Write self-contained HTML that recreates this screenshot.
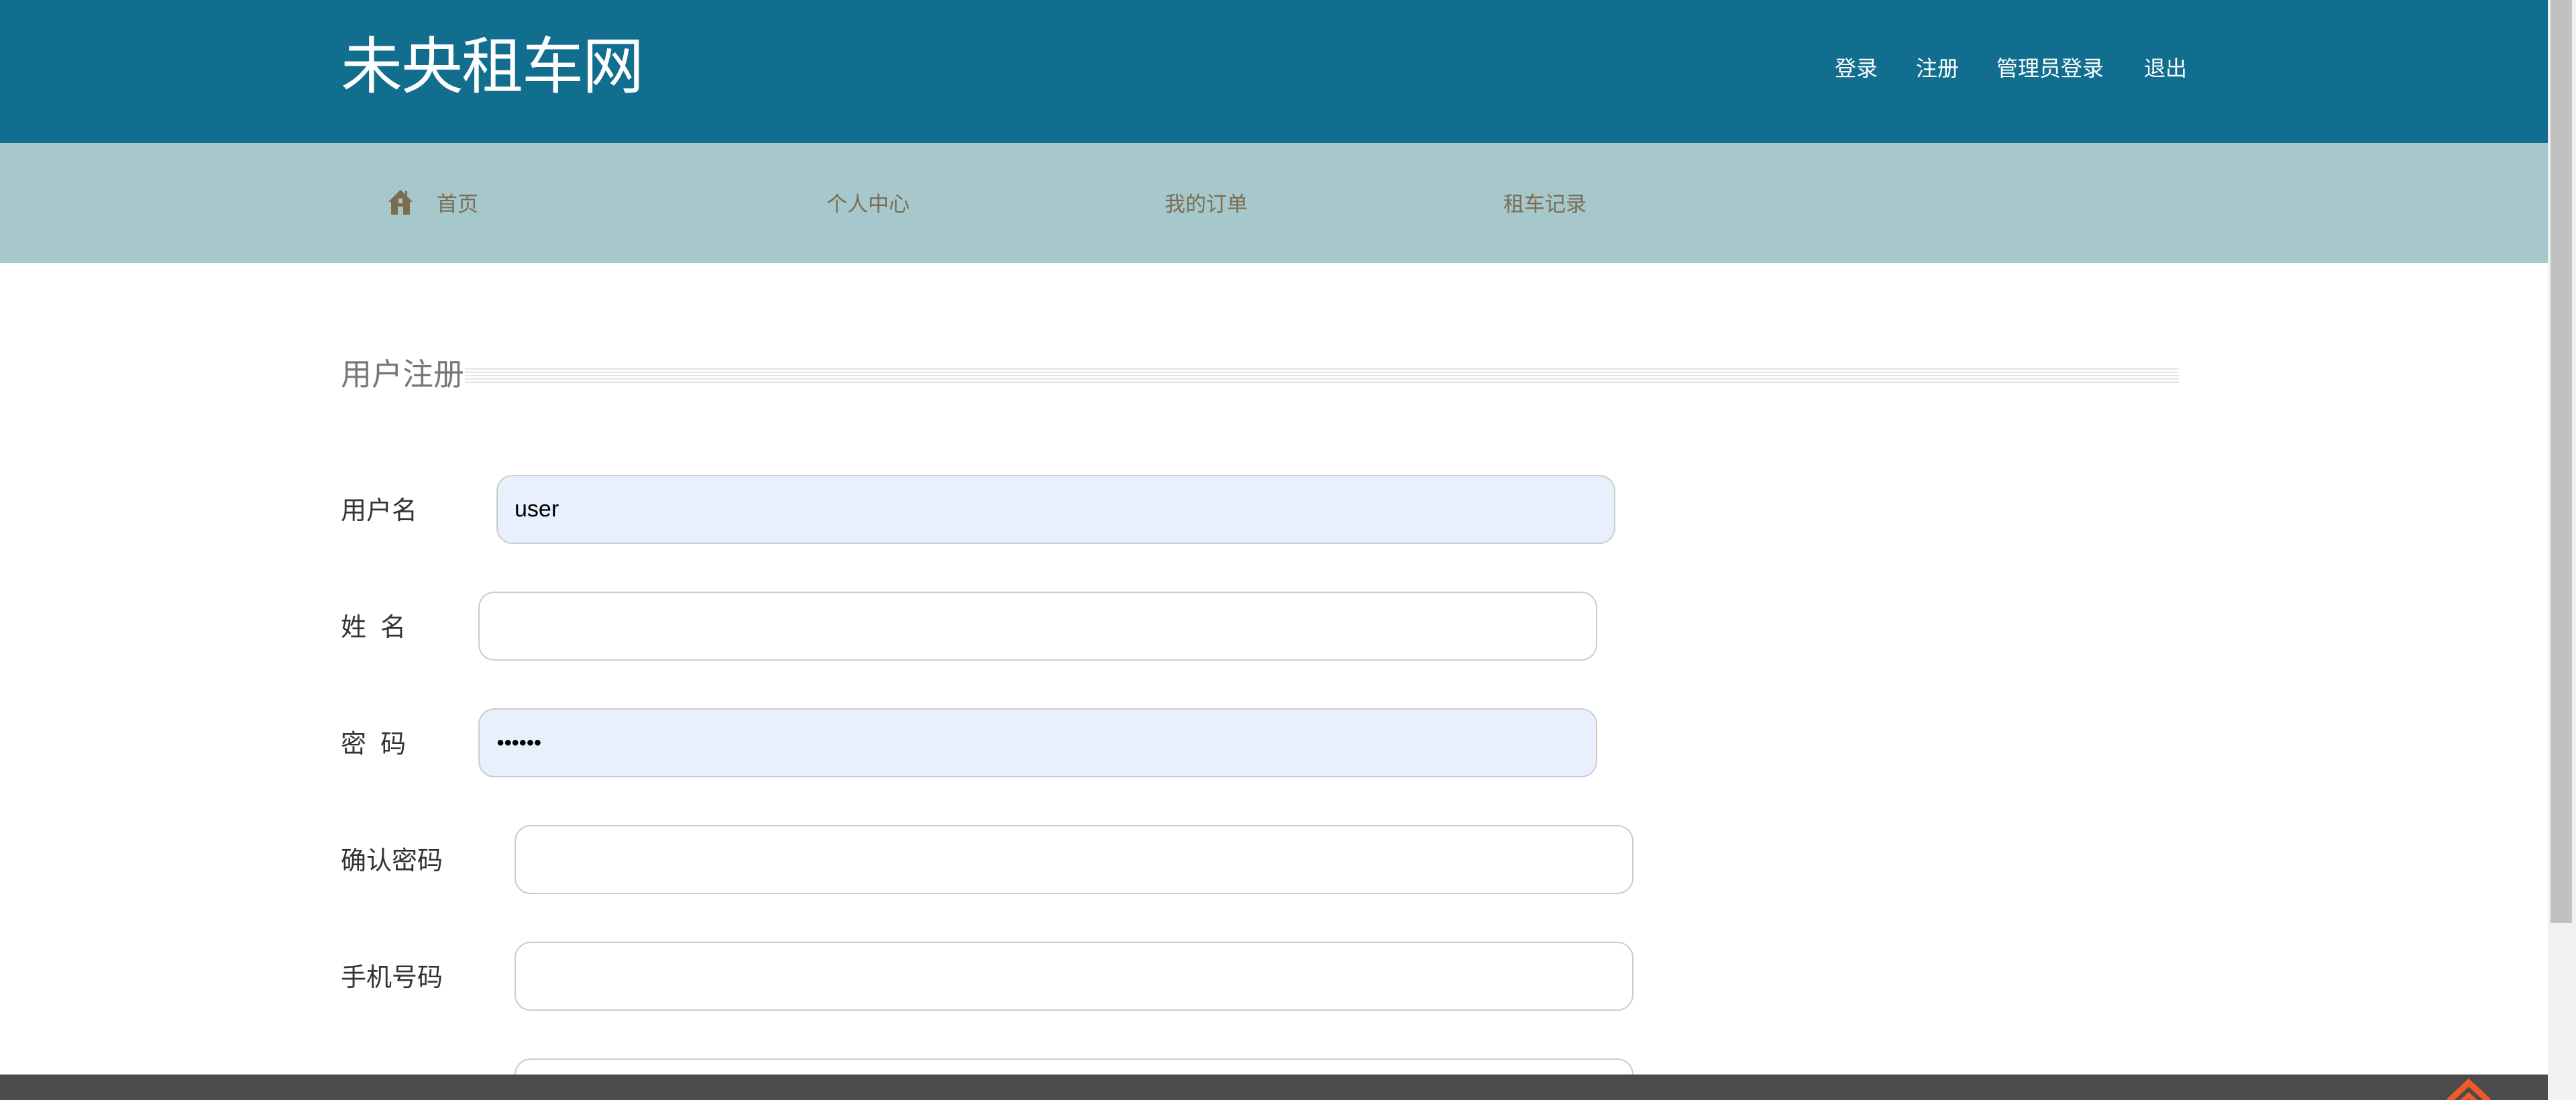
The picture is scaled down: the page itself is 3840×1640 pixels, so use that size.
<!DOCTYPE html>
<html style="overflow:hidden;height:1640px"><head><meta charset="utf-8"><style>
*{margin:0;padding:0;box-sizing:border-box}
body{width:3840px;height:1640px;overflow:hidden;background:#fff;position:relative;font-family:"Liberation Sans","Noto Sans CJK SC",sans-serif}
.hdr{position:absolute;left:0;top:0;width:3798px;height:213px;background:#116e8f}
.logo{position:absolute;left:508px;top:45px;font-size:92px;color:#fff;line-height:110px;letter-spacing:-2px}
.top{position:absolute;top:82px;font-size:32px;color:#fff;line-height:40px}
.nav{position:absolute;left:0;top:213px;width:3798px;height:179px;background:#a6c8cc}
.ni{position:absolute;top:285px;font-size:31px;color:#7b6c52;line-height:40px}
.ttl{position:absolute;left:508px;top:530px;font-size:46px;color:#777;line-height:56px}
.lines{position:absolute;left:693px;top:549px;width:2555px;height:24px;background:repeating-linear-gradient(#e4e4e4 0 2px,#fff 2px 5px)}
.lb{position:absolute;left:508px;font-size:38px;color:#333;line-height:50px}
.in{position:absolute;width:1668px;height:103px;border:2px solid #ccc;border-radius:24px;background:#fff;font-size:34px;color:#000;padding-left:25px;line-height:99px}
.af{background:#e8f0fe}
.ft{position:absolute;left:0;top:1602px;width:3798px;height:38px;background:#4b4b4b}
.sb{position:absolute;left:3798px;top:0;width:42px;height:1640px;background:#f1f1f1}
.th{position:absolute;left:3802px;top:0;width:32px;height:1376px;background:#c1c1c1}
</style></head><body>
<div class="hdr"></div>
<div class="logo">未央租车网</div>
<div class="top" style="left:2735px">登录</div>
<div class="top" style="left:2856px">注册</div>
<div class="top" style="left:2976px">管理员登录</div>
<div class="top" style="left:3196px">退出</div>
<div class="nav"></div>
<svg style="position:absolute;left:576px;top:280px" width="42" height="42" viewBox="0 0 42 42"><path d="M21 3 L3 21 L7 21 L7 40 L17 40 L17 28 L25 28 L25 40 L35 40 L35 21 L39 21 L31 13 L31 5 L28 5 L28 10 Z" fill="#7b6c52"/><rect x="18" y="16" width="6" height="7" fill="#a6c8cc"/></svg>
<div class="ni" style="left:651px">首页</div>
<div class="ni" style="left:1232px">个人中心</div>
<div class="ni" style="left:1736px">我的订单</div>
<div class="ni" style="left:2241px">租车记录</div>
<div class="ttl">用户注册</div>
<div class="lines"></div>
<div class="lb" style="top:737px">用户名</div>
<div class="in af" style="left:740px;top:708px">user</div>
<div class="lb" style="top:911px">姓&nbsp;&nbsp;名</div>
<div class="in" style="left:713px;top:882px"></div>
<div class="lb" style="top:1085px">密&nbsp;&nbsp;码</div>
<div class="in af" style="left:713px;top:1056px;font-size:20px;letter-spacing:-1px">●●●●●●</div>
<div class="lb" style="top:1259px">确认密码</div>
<div class="in" style="left:767px;top:1230px"></div>
<div class="lb" style="top:1433px">手机号码</div>
<div class="in" style="left:767px;top:1404px"></div>
<div style="position:absolute;left:0;top:1560px;width:3798px;height:42px;overflow:hidden"><div class="in" style="left:767px;top:18px"></div></div>
<div class="ft"></div>
<svg style="position:absolute;left:3640px;top:1608px" width="80" height="32" viewBox="0 0 80 32"><path d="M10 34 L40 6 L70 34" fill="none" stroke="#f05a28" stroke-width="9"/><path d="M30 34 L40 25 L50 34" fill="none" stroke="#f05a28" stroke-width="7"/></svg>
<div class="sb"></div><div class="th"></div>
</body></html>
